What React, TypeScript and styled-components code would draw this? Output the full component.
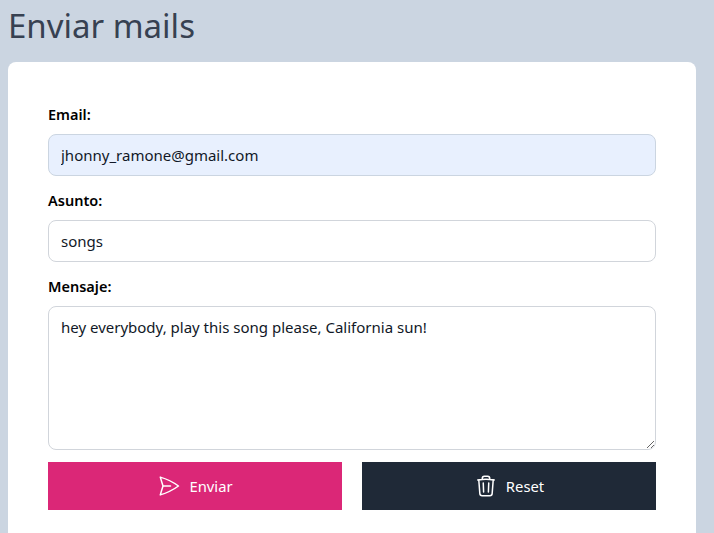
import React from "react";
import styled, { createGlobalStyle } from "styled-components";
import { HiOutlinePaperAirplane, HiOutlineTrash } from "react-icons/hi2";

const Global = createGlobalStyle`
  html, body { margin: 0; padding: 0; height: 100%; overflow: hidden; background: #cbd5e1; }
  * { box-sizing: border-box; }
  body { font-family: "Noto Sans", "Open Sans", sans-serif; }
`;

const Page = styled.main`
  padding: 0 18px 40px 8px;
`;

const Title = styled.h1`
  margin: 0 0 8px;
  font-size: 33px;
  line-height: 52px;
  padding-bottom: 2px;
  font-weight: 400;
  color: #374151;
`;

const Card = styled.form`
  display: flex;
  flex-direction: column;
  background: #fff;
  border-radius: 8px;
  padding: 40px 40px 40px;
`;

const Field = styled.div`
  display: flex;
  flex-direction: column;
  margin-bottom: 12px;
`;

const Label = styled.label`
  font-size: 14.5px;
  font-weight: 600;
  line-height: 24px;
  margin-bottom: 8px;
  color: #000;
`;

const controlStyles = `
  width: 100%;
  border: 1px solid #d1d5db;
  border-radius: 8px;
  padding: 0 12px;
  font-family: inherit;
  font-size: 15px;
  color: #111827;
  outline: none;
`;

const Input = styled.input<{ $filled?: boolean }>`
  ${controlStyles}
  height: 42px;
  background: ${(p) => (p.$filled ? "#e8f0fe" : "#fff")};
  border-color: ${(p) => (p.$filled ? "#cbd5e1" : "#d1d5db")};
`;

const Textarea = styled.textarea`
  ${controlStyles}
  display: block;
  height: 144px;
  padding: 8px 12px;
  line-height: 24px;
  background: #fff;
`;

const Actions = styled.div`
  display: grid;
  grid-template-columns: 1fr 1fr;
  gap: 20px;
`;

const Button = styled.button<{ $bg: string }>`
  display: flex;
  align-items: center;
  justify-content: center;
  gap: 8px;
  height: 48px;
  border: 0;
  background: ${(p) => p.$bg};
  color: #fff;
  font-family: inherit;
  font-size: 14.8px;
  svg { width: 24px; height: 24px; }
`;

export default function App() {
  return (
    <>
      <Global />
      <Page>
        <Title>Enviar mails</Title>
        <Card onSubmit={(e) => e.preventDefault()}>
          <Field>
            <Label>Email:</Label>
            <Input $filled defaultValue="jhonny_ramone@gmail.com" />
          </Field>
          <Field>
            <Label>Asunto:</Label>
            <Input defaultValue="songs" />
          </Field>
          <Field>
            <Label>Mensaje:</Label>
            <Textarea defaultValue="hey everybody, play this song please, California sun!" />
          </Field>
          <Actions>
            <Button type="submit" $bg="#db2777"><HiOutlinePaperAirplane />Enviar</Button>
            <Button type="reset" $bg="#1f2937"><HiOutlineTrash />Reset</Button>
          </Actions>
        </Card>
      </Page>
    </>
  );
}
